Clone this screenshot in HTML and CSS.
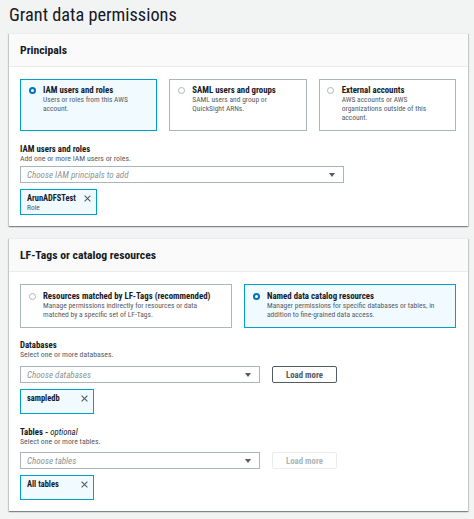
FILE: index.html
```html
<!DOCTYPE html>
<html lang="en">
<head>
<meta charset="utf-8">
<title>Grant data permissions</title>
<link rel="stylesheet" href="styles.css">
</head>
<body>
<div class="page">
  <h1 class="title">Grant data permissions</h1>

  <section class="card">
    <div class="card-header"><h2>Principals</h2></div>
    <div class="card-body">
      <div class="tiles tiles-3">
        <div class="tile selected">
          <span class="radio on"></span>
          <div class="tile-text">
            <div class="tile-label">IAM users and roles</div>
            <div class="tile-desc">Users or roles from this AWS<br>account.</div>
          </div>
        </div>
        <div class="tile">
          <span class="radio"></span>
          <div class="tile-text">
            <div class="tile-label">SAML users and groups</div>
            <div class="tile-desc">SAML users and group or<br>QuickSight ARNs.</div>
          </div>
        </div>
        <div class="tile">
          <span class="radio"></span>
          <div class="tile-text">
            <div class="tile-label">External accounts</div>
            <div class="tile-desc">AWS accounts or AWS<br>organizations outside of this<br>account.</div>
          </div>
        </div>
      </div>

      <div class="field field-first">
        <div class="field-label">IAM users and roles</div>
        <div class="field-desc">Add one or more IAM users or roles.</div>
        <div class="control-row">
          <div class="select select-wide">
            <span class="placeholder">Choose IAM principals to add</span>
            <span class="caret"></span>
          </div>
        </div>
        <div class="token">
          <div class="token-text">
            <div class="token-name">ArunADFSTest</div>
            <div class="token-sub">Role</div>
          </div>
          <svg class="token-x" width="7" height="7" viewBox="0 0 7 7"><path d="M0.6 0.6 L6.4 6.4 M6.4 0.6 L0.6 6.4" stroke="#545b64" stroke-width="1.1" fill="none"/></svg>
        </div>
      </div>
    </div>
  </section>

  <section class="card card-second">
    <div class="card-header"><h2>LF-Tags or catalog resources</h2></div>
    <div class="card-body">
      <div class="tiles tiles-2">
        <div class="tile">
          <span class="radio"></span>
          <div class="tile-text">
            <div class="tile-label">Resources matched by LF-Tags (recommended)</div>
            <div class="tile-desc">Manage permissions indirectly for resources or data<br>matched by a specific set of LF-Tags.</div>
          </div>
        </div>
        <div class="tile selected">
          <span class="radio on"></span>
          <div class="tile-text">
            <div class="tile-label">Named data catalog resources</div>
            <div class="tile-desc">Manager permissions for specific databases or tables, in<br>addition to fine-grained data access.</div>
          </div>
        </div>
      </div>

      <div class="field field-db">
        <div class="field-label">Databases</div>
        <div class="field-desc">Select one or more databases.</div>
        <div class="control-row row-db">
          <div class="select select-narrow">
            <span class="placeholder">Choose databases</span>
            <span class="caret"></span>
          </div>
          <button class="btn" type="button">Load more</button>
        </div>
        <div class="token token-single">
          <div class="token-text">
            <div class="token-name">sampledb</div>
          </div>
          <svg class="token-x" width="7" height="7" viewBox="0 0 7 7"><path d="M0.6 0.6 L6.4 6.4 M6.4 0.6 L0.6 6.4" stroke="#545b64" stroke-width="1.1" fill="none"/></svg>
        </div>
      </div>

      <div class="field field-tables">
        <div class="field-label">Tables - <i>optional</i></div>
        <div class="field-desc">Select one or more tables.</div>
        <div class="control-row row-tables">
          <div class="select select-narrow">
            <span class="placeholder">Choose tables</span>
            <span class="caret"></span>
          </div>
          <button class="btn btn-disabled" type="button" disabled>Load more</button>
        </div>
        <div class="token token-single">
          <div class="token-text">
            <div class="token-name">All tables</div>
          </div>
          <svg class="token-x" width="7" height="7" viewBox="0 0 7 7"><path d="M0.6 0.6 L6.4 6.4 M6.4 0.6 L0.6 6.4" stroke="#545b64" stroke-width="1.1" fill="none"/></svg>
        </div>
      </div>
    </div>
  </section>
</div>
</body>
</html>
```
FILE: styles.css
```css
* { box-sizing: border-box; }

html, body {
  margin: 0;
  padding: 0;
  background: #f2f3f3;
}

body {
  font-family: Roboto, "Liberation Sans", Arial, sans-serif;
  font-stretch: 87.5%;
  color: #16191f;
}

.page {
  padding: 0 6px 7px 9px;
}

.title {
  margin: 0 0 6px 0;
  padding-top: 2px;
  font-size: 18.3px;
  font-weight: normal;
  line-height: 25px;
  color: #16191f;
}

.card {
  background: #ffffff;
  box-shadow: 0 1px 1px 0 rgba(0, 28, 36, 0.3), 1px 1px 1px 0 rgba(0, 28, 36, 0.15), -1px 1px 1px 0 rgba(0, 28, 36, 0.15);
  border-top: 1px solid #eaeded;
}

.card-second {
  margin-top: 12px;
}

.card-header {
  height: 33px;
  background: #fafafa;
  border-bottom: 1px solid #eaeded;
  padding-left: 11px;
  display: flex;
  align-items: center;
}

.card-header h2 {
  margin: 0;
  font-size: 11.7px;
  font-weight: bold;
  line-height: 13px;
}

.card-body {
  padding: 12px 12px 11px 11px;
}

.tiles {
  display: grid;
  gap: 12px;
}

.tiles-3 { grid-template-columns: 1fr 1fr 1fr; }
.tiles-2 { grid-template-columns: 1fr 1fr; }

.tile {
  display: flex;
  align-items: flex-start;
  border: 1px solid #aab7b8;
  background: #ffffff;
  padding: 6px 8px 8px 7.5px;
}

.tile.selected {
  border-color: #00a1c9;
  background: #f1faff;
}

.tiles-2 .tile {
  padding-top: 7px;
}

.radio {
  flex: none;
  width: 7px;
  height: 7px;
  margin-top: 1px;
  margin-right: 7.5px;
  border-radius: 50%;
  border: 1px solid #aab7b8;
  background: #ffffff;
}

.radio.on {
  border: 2.3px solid #0073bb;
  background: #ffffff;
}

.tile-label {
  font-size: 8.8px;
  font-weight: bold;
  line-height: 9px;
  white-space: nowrap;
}

.tile-desc {
  font-size: 7.5px;
  line-height: 9px;
  color: #545b64;
  white-space: nowrap;
}

.field-first { margin-top: 14px; }
.field-db { margin-top: 13px; }
.field-tables { margin-top: 14px; }

.field-label {
  font-size: 8.8px;
  font-weight: bold;
  line-height: 9px;
}

.field-label i {
  font-weight: normal;
}

.field-desc {
  font-size: 7.8px;
  line-height: 9px;
  color: #545b64;
}

.control-row {
  display: flex;
  gap: 12px;
  margin-top: 3px;
}

.row-db { margin-top: 7px; }
.row-tables { margin-top: 6px; }

.select {
  height: 17px;
  border: 1px solid #aab7b8;
  background: #ffffff;
  display: flex;
  align-items: center;
  justify-content: space-between;
  padding: 0 8px 0 6px;
}

.select-wide { width: 324px; }
.select-narrow { width: 240px; }

.placeholder {
  font-size: 9px;
  font-style: italic;
  color: #879596;
}

.caret {
  width: 0;
  height: 0;
  border-left: 3px solid transparent;
  border-right: 3px solid transparent;
  border-top: 4px solid #545b64;
}

.btn {
  width: 65px;
  height: 17px;
  margin: 0;
  padding: 0;
  border: 1px solid #545b64;
  border-radius: 2px;
  background: #ffffff;
  font-family: Roboto, "Liberation Sans", Arial, sans-serif;
  font-stretch: 87.5%;
  font-size: 8.8px;
  font-weight: bold;
  color: #545b64;
}

.btn-disabled {
  border-color: #eaeded;
  color: #aab7b8;
}

.token {
  display: inline-flex;
  align-items: flex-start;
  gap: 8px;
  height: 26px;
  margin-top: 6px;
  border: 1px solid #00a1c9;
  background: #f1faff;
  padding: 3px 5px 1px 6px;
}

.token-single {
  width: 74px;
  height: 25px;
  justify-content: space-between;
}

.token-name {
  font-size: 8.4px;
  font-weight: bold;
  line-height: 10px;
  white-space: nowrap;
}

.token-sub {
  font-size: 7.4px;
  line-height: 10px;
  color: #545b64;
}

.token-x {
  flex: none;
  margin-top: 1.5px;
}
```
